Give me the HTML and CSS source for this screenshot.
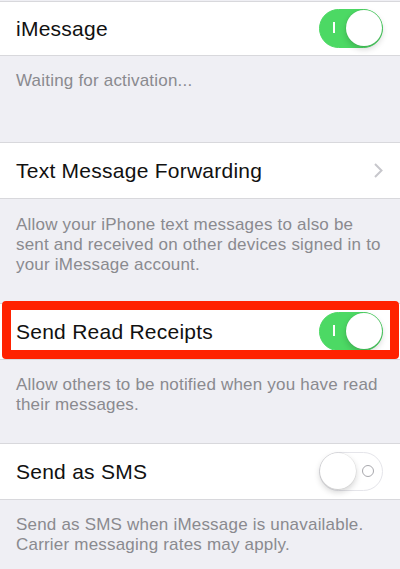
FILE: index.html
```html
<!DOCTYPE html>
<html lang="en">
<head>
    <meta charset="UTF-8">
    <meta name="viewport" content="width=device-width, initial-scale=1.0">
    <title>Messages</title>
    <link rel="stylesheet" href="styles.css">
</head>
<body>
    <div class="settings">
        <div class="group first">
            <div class="row">
                <span class="label">iMessage</span>
                <span class="switch on"></span>
            </div>
        </div>
        <p class="footer waiting">Waiting for activation...</p>

        <div class="group">
            <div class="row">
                <span class="label">Text Message Forwarding</span>
                <svg class="chevron" width="9" height="15" viewBox="0 0 9 15">
                    <path d="M1 1 L7.5 7.5 L1 14" fill="none" stroke="#c7c7cc" stroke-width="2"/>
                </svg>
            </div>
        </div>
        <p class="footer tall">Allow your iPhone text messages to also be sent and received on other devices signed in to your iMessage account.</p>

        <div class="group">
            <div class="row highlighted">
                <span class="label">Send Read Receipts</span>
                <span class="switch on"></span>
            </div>
        </div>
        <p class="footer">Allow others to be notified when you have read their messages.</p>

        <div class="group">
            <div class="row">
                <span class="label">Send as SMS</span>
                <span class="switch"></span>
            </div>
        </div>
        <p class="footer">Send as SMS when iMessage is unavailable. Carrier messaging rates may apply.</p>
    </div>
</body>
</html>
```

FILE: styles.css
```css
/* Global styles */
body {
    margin: 0;
    background: #efeff4;
    font-family: 'Liberation Sans', Arial, sans-serif;
    color: #000;
}

.settings {
    padding-top: 1px;
}

.group {
    background: #fff;
    border-top: 1px solid #d8d8dc;
    border-bottom: 1px solid #d8d8dc;
}

.row {
    height: 55px;
    display: flex;
    align-items: center;
    justify-content: space-between;
    padding: 0 17px 0 16px;
    position: relative;
}

.group.first .row {
    height: 53px;
}

.label {
    font-size: 21px;
    letter-spacing: 0.25px;
    color: #111;
}

/* Red marker drawn over a row */
.row.highlighted::after {
    content: '';
    position: absolute;
    top: -3px;
    right: 1px;
    bottom: 0;
    left: 2px;
    border: 9px solid #ff2200;
    border-radius: 4px;
}

.footer {
    margin: 0;
    padding: 15px 16px 28px;
    font-size: 17px;
    line-height: 20px;
    letter-spacing: 0.2px;
    color: #8a8a8f;
}

.footer.waiting {
    padding-bottom: 51px;
}

.footer.tall {
    padding-top: 16px;
}

/* iOS style switch */
.switch {
    width: 64px;
    height: 39px;
    border-radius: 20px;
    box-sizing: border-box;
    border: 1.5px solid #e5e5ea;
    background: #fff;
    position: relative;
    flex-shrink: 0;
}

.switch::before {
    content: '';
    position: absolute;
    right: 8px;
    top: 12px;
    width: 10px;
    height: 10px;
    border: 1.5px solid #a8a8ad;
    border-radius: 50%;
}

.switch::after {
    content: '';
    position: absolute;
    left: 0;
    top: 0;
    width: 36px;
    height: 36px;
    border-radius: 50%;
    background: #fff;
    box-shadow: 0 3px 6px rgba(0, 0, 0, 0.18), 0 0 0 0.5px rgba(0, 0, 0, 0.1);
}

.switch.on {
    background: #4cd964;
    border-color: #4cd964;
}

.switch.on::before {
    left: 13px;
    top: 12px;
    width: 0;
    height: 11px;
    border: none;
    border-left: 2px solid #fff;
    border-radius: 0;
}

.switch.on::after {
    left: auto;
    right: 0;
}
```
